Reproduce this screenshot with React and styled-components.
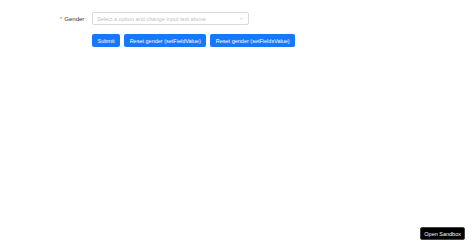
import React from "react";
import styled, { createGlobalStyle } from "styled-components";

const GlobalStyle = createGlobalStyle`
  html, body {
    margin: 0;
    padding: 0;
    background: #ffffff;
    font-family: "Liberation Sans", Arial, sans-serif;
  }
`;

const Page = styled.div`
  padding-top: 12px;
  display: flex;
  flex-direction: column;
  gap: 9px;
`;

const FormRow = styled.div`
  display: grid;
  grid-template-columns: 92px 157px;
  align-items: center;
`;

const Label = styled.label`
  display: flex;
  justify-content: flex-end;
  align-items: center;
  padding-right: 5px;
  font-size: 6px;
  color: rgba(0, 0, 0, 0.88);
  white-space: nowrap;
`;

const Required = styled.span`
  color: #ff4d4f;
  margin-right: 2px;
`;

const Colon = styled.span`
  margin-left: 1px;
`;

const Select = styled.div`
  box-sizing: border-box;
  height: 13px;
  border: 1px solid #d9d9d9;
  border-radius: 2px;
  display: flex;
  align-items: center;
  justify-content: space-between;
  padding: 0 4px 0 4px;
  background: #fff;
`;

const Placeholder = styled.span`
  font-size: 5.6px;
  color: #bfbfbf;
  white-space: nowrap;
`;

const Actions = styled.div`
  display: flex;
  gap: 4px;
  margin-left: 92px;
`;

const Button = styled.button`
  box-sizing: border-box;
  height: 13px;
  padding: 0 5.5px;
  border: none;
  border-radius: 2px;
  background: #1677ff;
  color: #fff;
  font-family: "Liberation Sans", Arial, sans-serif;
  font-size: 5.5px;
  white-space: nowrap;
  cursor: pointer;
`;

const Sandbox = styled.button`
  position: fixed;
  right: 9px;
  bottom: 8px;
  box-sizing: border-box;
  height: 13px;
  padding: 0 3px;
  background: #000;
  color: #fff;
  border: 1px solid #444;
  border-radius: 2px;
  font-family: "Liberation Sans", Arial, sans-serif;
  font-size: 5.5px;
  white-space: nowrap;
`;

const Chevron = () => (
  <svg width="5" height="5" viewBox="0 0 10 10">
    <path d="M1.5 3.5 L5 7 L8.5 3.5" fill="none" stroke="#bfbfbf" strokeWidth="1.3" />
  </svg>
);

export default function App() {
  return (
    <>
      <GlobalStyle />
      <Page>
        <FormRow>
          <Label>
            <Required>*</Required>Gender<Colon>:</Colon>
          </Label>
          <Select>
            <Placeholder>Select a option and change input text above</Placeholder>
            <Chevron />
          </Select>
        </FormRow>
        <Actions>
          <Button>Submit</Button>
          <Button>Reset gender (setFieldValue)</Button>
          <Button>Reset gender (setFieldsValue)</Button>
        </Actions>
      </Page>
      <Sandbox>Open Sandbox</Sandbox>
    </>
  );
}
